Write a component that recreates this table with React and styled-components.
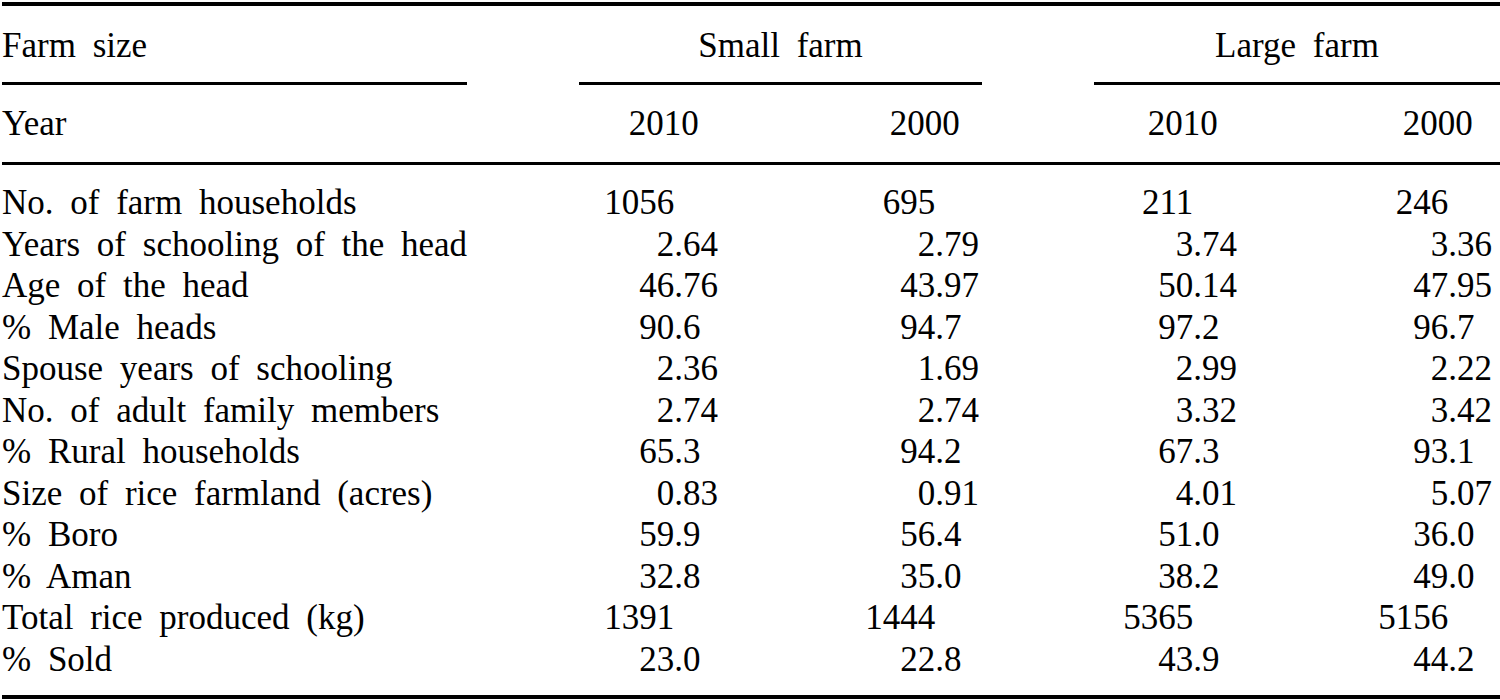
import React from 'react';
import styled, { createGlobalStyle } from 'styled-components';

const GlobalStyle = createGlobalStyle`
  html, body {
    margin: 0;
    padding: 0;
    background: #ffffff;
  }
  body {
    font-family: "Liberation Serif", "Times New Roman", serif;
    color: #000000;
  }
`;

const cols = '577px 139px 261px 258px 255px';

const rows = [
  ['No. of farm households', '1056', '695', '211', '246'],
  ['Years of schooling of the head', '2.64', '2.79', '3.74', '3.36'],
  ['Age of the head', '46.76', '43.97', '50.14', '47.95'],
  ['% Male heads', '90.6', '94.7', '97.2', '96.7'],
  ['Spouse years of schooling', '2.36', '1.69', '2.99', '2.22'],
  ['No. of adult family members', '2.74', '2.74', '3.32', '3.42'],
  ['% Rural households', '65.3', '94.2', '67.3', '93.1'],
  ['Size of rice farmland (acres)', '0.83', '0.91', '4.01', '5.07'],
  ['% Boro', '59.9', '56.4', '51.0', '36.0'],
  ['% Aman', '32.8', '35.0', '38.2', '49.0'],
  ['Total rice produced (kg)', '1391', '1444', '5365', '5156'],
  ['% Sold', '23.0', '22.8', '43.9', '44.2'],
];

// pad so numbers line up on the decimal point
const padFor = (v) => {
  const dot = v.indexOf('.');
  const decimals = dot === -1 ? 0 : v.length - dot - 1;
  return (2 - decimals) * 0.5 + (decimals === 0 ? 0.25 : 0);
};

const Page = styled.div`
  padding: 2px 0 0 2px;
  width: 1498px;
  font-size: 35px;
  word-spacing: 8px;
`;

const Table = styled.div`
  border-top: 4px solid #000;
  border-bottom: 4px solid #000;
`;

const GroupRow = styled.div`
  display: grid;
  grid-template-columns: 465px 112px 403px 112px 406px;
`;

const GroupCell = styled.div`
  padding: 19px 0 15px;
  line-height: 41.5px;
  text-align: ${(p) => (p.$center ? 'center' : 'left')};
  border-bottom: 3px solid ${(p) => (p.$ruled ? '#000' : 'transparent')};
  white-space: nowrap;
`;

const YearRow = styled.div`
  display: grid;
  grid-template-columns: ${cols};
  border-bottom: 3px solid #000;
  padding: 18px 0 18px;
  line-height: 41.5px;
`;

const Body = styled.div`
  padding: 17px 0 15px;
`;

const DataRow = styled.div`
  display: grid;
  grid-template-columns: ${cols};
  line-height: 41.5px;
`;

const Label = styled.div`
  white-space: nowrap;
`;

const Num = styled.div`
  text-align: right;
  padding-right: ${(p) => p.$pad}em;
  white-space: nowrap;
`;

export default function App() {
  return (
    <>
      <GlobalStyle />
      <Page>
        <Table>
          <GroupRow>
            <GroupCell $ruled>Farm size</GroupCell>
            <GroupCell />
            <GroupCell $ruled $center>Small farm</GroupCell>
            <GroupCell />
            <GroupCell $ruled $center>Large farm</GroupCell>
          </GroupRow>
          <YearRow>
            <Label>Year</Label>
            {['2010', '2000', '2010', '2000'].map((y, i) => (
              <Num key={i} $pad={0.55}>{y}</Num>
            ))}
          </YearRow>
          <Body>
            {rows.map(([label, ...vals]) => (
              <DataRow key={label}>
                <Label>{label}</Label>
                {vals.map((v, i) => (
                  <Num key={i} $pad={padFor(v)}>{v}</Num>
                ))}
              </DataRow>
            ))}
          </Body>
        </Table>
      </Page>
    </>
  );
}
